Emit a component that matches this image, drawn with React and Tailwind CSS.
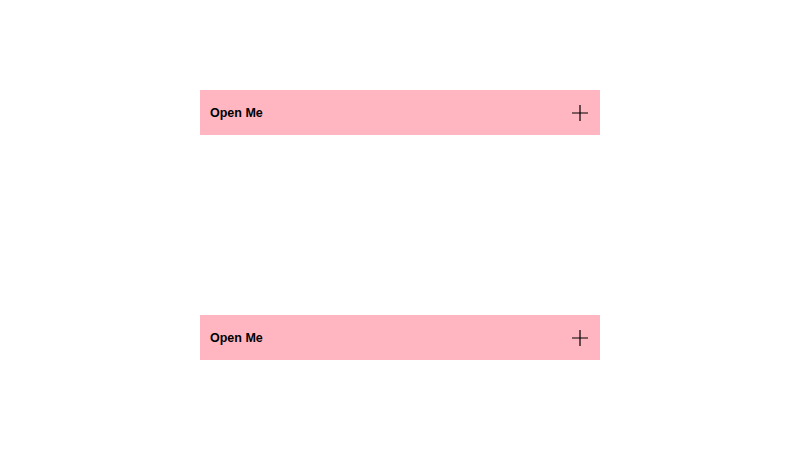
export default function App() {
  const Item = () => (
    <div className="w-[400px] h-[45px] bg-[#ffb6c1] flex items-center justify-between pl-[10px] pr-[12px]">
      <span className="text-[12.5px] leading-[16px] mt-[1px] font-bold text-black" style={{ fontFamily: '"Liberation Sans", Arial, sans-serif' }}>Open Me</span>
      <svg width="16" height="16" viewBox="0 0 16 16" className="block">
        <path d="M8 0V16M0 8H16" stroke="#000" strokeWidth="1.2" fill="none" />
      </svg>
    </div>
  );
  return (
    <div className="w-[800px] h-[450px] bg-white flex flex-col items-center pt-[90px] gap-[180px]">
      <Item />
      <Item />
    </div>
  );
}
